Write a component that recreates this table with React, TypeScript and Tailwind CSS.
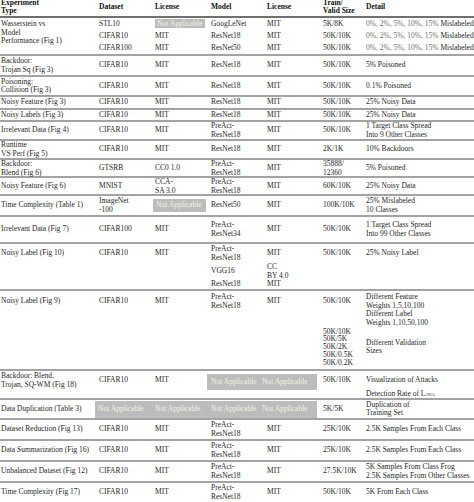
import React from 'react';

const cols = 'grid grid-cols-[97px_56px_56px_56px_56px_43px_110px]';
const rule = 'border-b-2 border-[#a3a3a3]';

type CellProps = { children?: React.ReactNode; className?: string; align?: string };

const Cell: React.FC<CellProps> = ({ children, className = '', align = 'items-center' }) => (
  <div className={`flex ${align} whitespace-nowrap pl-[2px] ${className}`}>
    <div>{children}</div>
  </div>
);

const First: React.FC<CellProps> = ({ children, className = '', align = 'items-center' }) => (
  <div className={`flex ${align} whitespace-nowrap pl-[1px] ${className}`}>
    <div>{children}</div>
  </div>
);

const NA: React.FC = () => (
  <span className="bg-[#bcbcbc] px-[2px] text-[#f4f2e4]">Not Applicable</span>
);

const Pct: React.FC = () => (
  <span>
    <span className="text-[#6f6f6f]">0%, 2%, 5%, 10%, 15%</span> Mislabeled
  </span>
);

const Simple: React.FC<{ name: React.ReactNode; model: React.ReactNode; size: string; detail: React.ReactNode; h: string }> = ({ name, model, size, detail, h }) => (
  <div className={`${cols} ${h} ${rule}`}>
    <First>{name}</First>
    <Cell>CIFAR10</Cell>
    <Cell>MIT</Cell>
    <Cell>{model}</Cell>
    <Cell>MIT</Cell>
    <Cell>{size}</Cell>
    <Cell>{detail}</Cell>
  </div>
);

const App: React.FC = () => {
  return (
    <div className="h-[502px] w-[474px] overflow-hidden bg-white font-['Liberation_Serif',serif] text-[7.5px] leading-[8.5px] text-[#262626]">
      {/* header */}
      <div className={`${cols} -mt-[2px] h-[20px] border-b-2 border-[#707070] font-bold text-[#111]`}>
        <First>Experiment<br />Type</First>
        <Cell>Dataset</Cell>
        <Cell>License</Cell>
        <Cell>Model</Cell>
        <Cell>License</Cell>
        <Cell>Train/<br />Valid Size</Cell>
        <Cell>Detail</Cell>
      </div>

      <div className={`${cols} h-[38px] grid-rows-[12px_12px_12px] ${rule}`}>
        <First className="row-span-3 pt-[2px]" align="items-start">
          Wasserstein vs<br />Model<br />Performance (Fig 1)
        </First>
        <Cell>STL10</Cell>
        <Cell className="pl-0"><NA /></Cell>
        <Cell>GoogLeNet</Cell>
        <Cell>MIT</Cell>
        <Cell>5K/8K</Cell>
        <Cell><Pct /></Cell>
        <Cell>CIFAR10</Cell>
        <Cell>MIT</Cell>
        <Cell>ResNet18</Cell>
        <Cell>MIT</Cell>
        <Cell>50K/10K</Cell>
        <Cell><Pct /></Cell>
        <Cell>CIFAR100</Cell>
        <Cell>MIT</Cell>
        <Cell>ResNet50</Cell>
        <Cell>MIT</Cell>
        <Cell>50K/10K</Cell>
        <Cell><Pct /></Cell>
      </div>

      <Simple h="h-[21px]" name={<>Backdoor:<br />Trojan Sq (Fig 3)</>} model="ResNet18" size="50K/10K" detail="5% Poisoned" />
      <Simple h="h-[20px]" name={<>Poisoning:<br />Collision (Fig 3)</>} model="ResNet18" size="50K/10K" detail="0.1% Poisoned" />
      <Simple h="h-[13px]" name="Noisy Feature (Fig 3)" model="ResNet18" size="50K/10K" detail="25% Noisy Data" />
      <Simple h="h-[12px]" name="Noisy Labels (Fig 3)" model="ResNet18" size="50K/10K" detail="25% Noisy Data" />
      <Simple h="h-[19px]" name="Irrelevant Data (Fig 4)" model={<>PreAct-<br />ResNet18</>} size="50K/10K" detail={<>1 Target Class Spread<br />Into 9 Other Classes</>} />
      <Simple h="h-[19px]" name={<>Runtime<br />VS Perf (Fig 5)</>} model="ResNet18" size="2K/1K" detail="10% Backdoors" />

      <div className={`${cols} h-[18px] ${rule}`}>
        <First>Backdoor:<br />Blend (Fig 6)</First>
        <Cell>GTSRB</Cell>
        <Cell>CC0 1.0</Cell>
        <Cell>PreAct-<br />ResNet18</Cell>
        <Cell>MIT</Cell>
        <Cell>35888/<br />12360</Cell>
        <Cell>5% Poisoned</Cell>
      </div>

      <div className={`${cols} h-[18px] ${rule}`}>
        <First>Noisy Feature (Fig 6)</First>
        <Cell>MNIST</Cell>
        <Cell>CCA-<br />SA 3.0</Cell>
        <Cell>PreAct-<br />ResNet18</Cell>
        <Cell>MIT</Cell>
        <Cell>60K/10K</Cell>
        <Cell>25% Noisy Data</Cell>
      </div>

      <div className={`${cols} h-[21px] ${rule}`}>
        <First>Time Complexity (Table 1)</First>
        <Cell>ImageNet<br />-100</Cell>
        <div className="flex items-center">
          <div className="flex h-[13px] w-[53px] items-center bg-[#bcbcbc] pl-[3px] whitespace-nowrap text-[#f4f2e4]">Not Applicable</div>
        </div>
        <Cell>ResNet50</Cell>
        <Cell>MIT</Cell>
        <Cell>100K/10K</Cell>
        <Cell>25% Mislabeled<br />10 Classes</Cell>
      </div>

      <div className={`${cols} h-[27px] ${rule}`}>
        <First>Irrelevant Data (Fig 7)</First>
        <Cell>CIFAR100</Cell>
        <Cell>MIT</Cell>
        <Cell>PreAct-<br />ResNet34</Cell>
        <Cell>MIT</Cell>
        <Cell>50K/10K</Cell>
        <Cell>1 Target Class Spread<br />Into 99 Other Classes</Cell>
      </div>

      <div className={`${cols} h-[47px] grid-rows-[19px_17px_9px] ${rule}`}>
        <First>Noisy Label (Fig 10)</First>
        <Cell>CIFAR10</Cell>
        <Cell>MIT</Cell>
        <Cell>PreAct-<br />ResNet18</Cell>
        <Cell>MIT</Cell>
        <Cell>50K/10K</Cell>
        <Cell>25% Noisy Label</Cell>
        <div /><div /><div />
        <Cell>VGG16</Cell>
        <Cell>CC<br />BY 4.0</Cell>
        <div /><div />
        <div /><div /><div />
        <Cell>ResNet18</Cell>
        <Cell>MIT</Cell>
        <div /><div />
      </div>

      <div className={`${cols} h-[80px] grid-rows-[21px_13px_44px] ${rule}`}>
        <First>Noisy Label (Fig 9)</First>
        <Cell>CIFAR10</Cell>
        <Cell>MIT</Cell>
        <Cell>PreAct-<br />ResNet18</Cell>
        <Cell>MIT</Cell>
        <Cell>50K/10K</Cell>
        <Cell>Different Feature<br />Weights 1,5,10,100</Cell>
        <div /><div /><div /><div /><div /><div />
        <Cell>Different Label<br />Weights 1,10,50,100</Cell>
        <div /><div /><div /><div /><div />
        <Cell className="leading-[7.75px]">50K/10K<br />50K/5K<br />50K/2K<br />50K/0.5K<br />50K/0.2K</Cell>
        <Cell>Different Validation<br />Sizes</Cell>
      </div>

      <div className={`${cols} h-[29px] grid-rows-[19px_8px] ${rule}`}>
        <First>Backdoor: Blend,<br />Trojan, SQ-WM (Fig 18)</First>
        <Cell>CIFAR10</Cell>
        <Cell>MIT</Cell>
        <div className="col-span-2 flex items-end">
          <div className="-ml-[2px] flex h-[16px] w-[110px] items-center bg-[#bcbcbc] pl-[4px] whitespace-nowrap text-[#f4f2e4]">
            <span className="w-[51px]">Not Applicable</span>
            <span>Not Applicable</span>
          </div>
        </div>
        <Cell>50K/10K</Cell>
        <Cell>Visualization of Attacks</Cell>
        <div /><div /><div /><div /><div /><div />
        <Cell>
          Detection Rate of <span className="[font-variant:small-caps]">Lava</span>
        </Cell>
      </div>

      <div className={`${cols} h-[20px] ${rule}`}>
        <First>Data Duplication (Table 3)</First>
        <div className="col-span-4 flex items-center">
          <div className="-ml-[2px] flex h-[17px] w-[222px] items-center bg-[#bcbcbc] pl-[3px] whitespace-nowrap text-[#f4f2e4]">
            <span className="w-[57px]">Not Applicable</span>
            <span className="w-[56px]">Not Applicable</span>
            <span className="w-[51px]">Not Applicable</span>
            <span>Not Applicable</span>
          </div>
        </div>
        <Cell>5K/5K</Cell>
        <Cell>Duplication of<br />Training Set</Cell>
      </div>

      <Simple h="h-[21px]" name="Dataset Reduction (Fig 13)" model={<>PreAct-<br />ResNet18</>} size="25K/10K" detail="2.5K Samples From Each Class" />
      <Simple h="h-[21px]" name="Data Summarization (Fig 16)" model={<>PreAct-<br />ResNet18</>} size="25K/10K" detail="2.5K Samples From Each Class" />
      <Simple h="h-[21px]" name="Unbalanced Dataset (Fig 12)" model={<>PreAct-<br />ResNet18</>} size="27.5K/10K" detail={<>5K Samples From Class Frog<br />2.5K Samples From Other Classes</>} />
      <Simple h="h-[21px]" name="Time Complexity (Fig 17)" model={<>PreAct-<br />ResNet18</>} size="50K/10K" detail="5K From Each Class" />
    </div>
  );
};

export default App;
